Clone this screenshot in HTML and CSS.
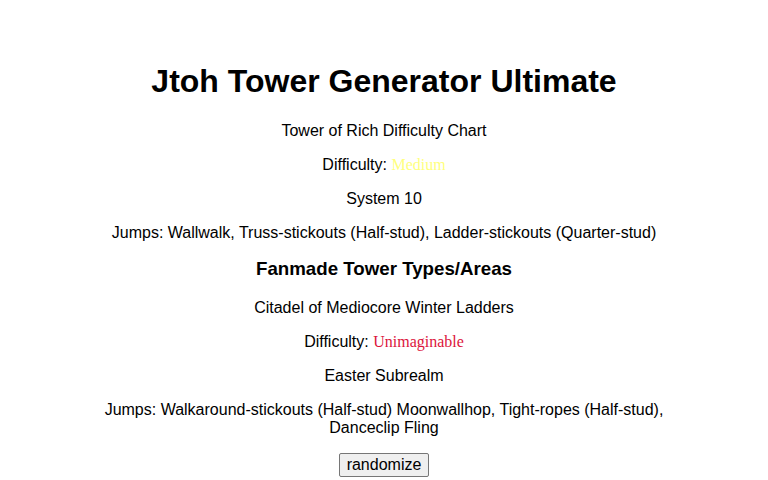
FILE: index.html
```html
<!DOCTYPE html>
<html lang="en">
<head>
<meta charset="utf-8">
<title>Jtoh Tower Generator Ultimate</title>
<link rel="stylesheet" href="styles.css">
</head>
<body>
<main class="generator">
  <h1 class="title">Jtoh Tower Generator Ultimate</h1>
  <p class="line">Tower of Rich Difficulty Chart</p>
  <p class="line">Difficulty: <span class="diff diff-medium">Medium</span></p>
  <p class="line">System 10</p>
  <p class="line">Jumps: Wallwalk, Truss-stickouts (Half-stud), Ladder-stickouts (Quarter-stud)</p>
  <h3 class="section">Fanmade Tower Types/Areas</h3>
  <p class="line">Citadel of Mediocore Winter Ladders</p>
  <p class="line">Difficulty: <span class="diff diff-unimaginable">Unimaginable</span></p>
  <p class="line">Easter Subrealm</p>
  <p class="line">Jumps: Walkaround-stickouts (Half-stud) Moonwallhop, Tight-ropes (Half-stud), Danceclip Fling</p>
  <button class="randomize" type="button">randomize</button>
</main>
</body>
</html>
```
FILE: styles.css
```css
html, body {
  background: #ffffff;
}

body {
  margin: 8px;
  padding-top: 34px;
  font-family: "Liberation Sans", Arial, sans-serif;
  font-size: 16px;
  color: #000000;
}

.generator {
  max-width: 600px;
  margin: 0 auto;
  text-align: center;
}

.title {
  font-size: 32px;
  font-weight: bold;
  margin: 21.44px 0;
}

.line {
  margin: 16px 0;
}

.section {
  font-size: 18.72px;
  font-weight: bold;
  margin: 0 0 19.5px;
}

.diff {
  font-family: "Liberation Serif", "Times New Roman", serif;
}

.diff-medium {
  color: #ffff80;
}

.diff-unimaginable {
  color: #dc143c;
}

.randomize {
  font-family: "Liberation Sans", Arial, sans-serif;
  font-size: 16px;
  color: #000000;
  background: #efefef;
  border: 1px solid #767676;
  border-radius: 2px;
  padding: 2px 7px;
}
```
